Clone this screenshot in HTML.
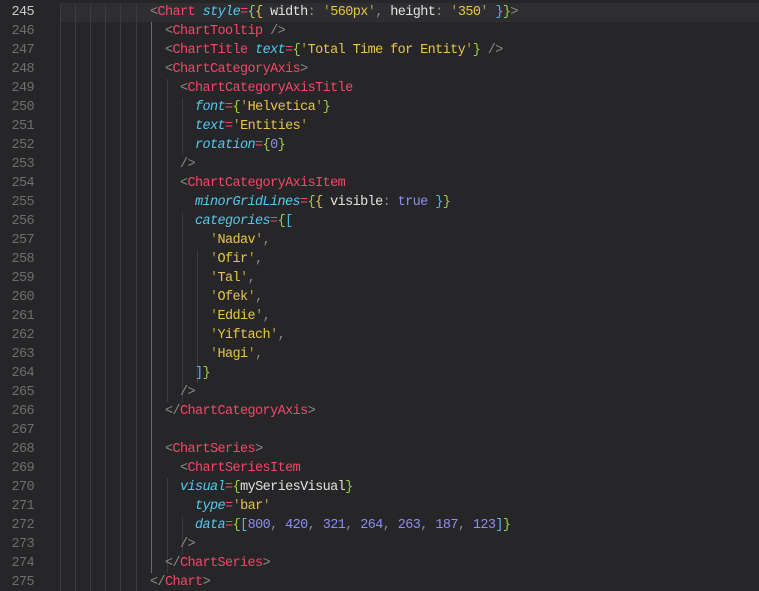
<!DOCTYPE html>
<html><head><meta charset="utf-8"><style>
html,body{margin:0;padding:0;background:#262628;width:759px;height:591px;overflow:hidden}
.ed{position:relative;width:759px;height:591px;font-family:"Liberation Mono",monospace;font-size:13.5px;letter-spacing:-0.6px}
.ln{position:absolute;left:0;width:34px;text-align:right;color:#6e6e6e;height:19px;line-height:19px}
.cur{color:#c8c8c8}
.l{position:absolute;left:60px;height:19px;line-height:19px;white-space:pre;color:#e2e2e2}
.hl{position:absolute;left:60px;right:0;top:3px;height:19px;background:#2e2e30}
.g{position:absolute;width:1px;background:#3c3c3e}
.t{color:#f44769}.p{color:#8a8a8a}.a{color:#56c8ec;font-style:italic}.e{color:#f44769}
.b1{color:#9bcf45}.b2{color:#e6c84a}.b3{color:#4fb8e0}.s{color:#e8c54a}.q{color:#b89a40}.n{color:#8d8df2}.w{color:#e2e2e2}
</style></head><body><div class="ed">
<div class="hl"></div>
<div class="g" style="left:60px;top:3px;height:588px"></div>
<div class="g" style="left:75px;top:3px;height:588px"></div>
<div class="g" style="left:90px;top:3px;height:588px"></div>
<div class="g" style="left:105px;top:3px;height:588px"></div>
<div class="g" style="left:120px;top:3px;height:588px"></div>
<div class="g" style="left:136px;top:3px;height:588px"></div>
<div class="g" style="left:151px;top:22px;height:551px;background:#6a6a6a"></div>
<div class="g" style="left:167px;top:79px;height:323px"></div>
<div class="g" style="left:167px;top:478px;height:95px"></div>
<div class="g" style="left:182px;top:98px;height:57px"></div>
<div class="g" style="left:182px;top:212px;height:190px"></div>
<div class="g" style="left:182px;top:516px;height:38px"></div>
<div class="g" style="left:197px;top:250px;height:133px"></div>

<div class="ln cur" style="top:3px">245</div>
<div class="ln" style="top:22px">246</div>
<div class="ln" style="top:41px">247</div>
<div class="ln" style="top:60px">248</div>
<div class="ln" style="top:79px">249</div>
<div class="ln" style="top:98px">250</div>
<div class="ln" style="top:117px">251</div>
<div class="ln" style="top:136px">252</div>
<div class="ln" style="top:155px">253</div>
<div class="ln" style="top:174px">254</div>
<div class="ln" style="top:193px">255</div>
<div class="ln" style="top:212px">256</div>
<div class="ln" style="top:231px">257</div>
<div class="ln" style="top:250px">258</div>
<div class="ln" style="top:269px">259</div>
<div class="ln" style="top:288px">260</div>
<div class="ln" style="top:307px">261</div>
<div class="ln" style="top:326px">262</div>
<div class="ln" style="top:345px">263</div>
<div class="ln" style="top:364px">264</div>
<div class="ln" style="top:383px">265</div>
<div class="ln" style="top:402px">266</div>
<div class="ln" style="top:421px">267</div>
<div class="ln" style="top:440px">268</div>
<div class="ln" style="top:459px">269</div>
<div class="ln" style="top:478px">270</div>
<div class="ln" style="top:497px">271</div>
<div class="ln" style="top:516px">272</div>
<div class="ln" style="top:535px">273</div>
<div class="ln" style="top:554px">274</div>
<div class="ln" style="top:573px">275</div>

<div class="l" style="top:3px">            <span class="p">&lt;</span><span class="t">Chart</span> <span class="a">style</span><span class="e">=</span><span class="b1">{</span><span class="b2">{</span> width<span class="p">:</span> <span class="q">'</span><span class="s">560px</span><span class="q">'</span><span class="p">,</span> height<span class="p">:</span> <span class="q">'</span><span class="s">350</span><span class="q">'</span> <span class="b3">}</span><span class="b1">}</span><span class="p">&gt;</span></div>
<div class="l" style="top:22px">              <span class="p">&lt;</span><span class="t">ChartTooltip</span> <span class="p">/&gt;</span></div>
<div class="l" style="top:41px">              <span class="p">&lt;</span><span class="t">ChartTitle</span> <span class="a">text</span><span class="e">=</span><span class="b1">{</span><span class="q">'</span><span class="s">Total Time for Entity</span><span class="q">'</span><span class="b1">}</span> <span class="p">/&gt;</span></div>
<div class="l" style="top:60px">              <span class="p">&lt;</span><span class="t">ChartCategoryAxis</span><span class="p">&gt;</span></div>
<div class="l" style="top:79px">                <span class="p">&lt;</span><span class="t">ChartCategoryAxisTitle</span></div>
<div class="l" style="top:98px">                  <span class="a">font</span><span class="e">=</span><span class="b1">{</span><span class="q">'</span><span class="s">Helvetica</span><span class="q">'</span><span class="b1">}</span></div>
<div class="l" style="top:117px">                  <span class="a">text</span><span class="e">=</span><span class="q">'</span><span class="s">Entities</span><span class="q">'</span></div>
<div class="l" style="top:136px">                  <span class="a">rotation</span><span class="e">=</span><span class="b1">{</span><span class="n">0</span><span class="b1">}</span></div>
<div class="l" style="top:155px">                <span class="p">/&gt;</span></div>
<div class="l" style="top:174px">                <span class="p">&lt;</span><span class="t">ChartCategoryAxisItem</span></div>
<div class="l" style="top:193px">                  <span class="a">minorGridLines</span><span class="e">=</span><span class="b1">{</span><span class="b2">{</span> visible<span class="p">:</span> <span class="n">true</span> <span class="b3">}</span><span class="b1">}</span></div>
<div class="l" style="top:212px">                  <span class="a">categories</span><span class="e">=</span><span class="b1">{</span><span class="b3">[</span></div>
<div class="l" style="top:231px">                    <span class="q">'</span><span class="s">Nadav</span><span class="q">'</span><span class="p">,</span></div>
<div class="l" style="top:250px">                    <span class="q">'</span><span class="s">Ofir</span><span class="q">'</span><span class="p">,</span></div>
<div class="l" style="top:269px">                    <span class="q">'</span><span class="s">Tal</span><span class="q">'</span><span class="p">,</span></div>
<div class="l" style="top:288px">                    <span class="q">'</span><span class="s">Ofek</span><span class="q">'</span><span class="p">,</span></div>
<div class="l" style="top:307px">                    <span class="q">'</span><span class="s">Eddie</span><span class="q">'</span><span class="p">,</span></div>
<div class="l" style="top:326px">                    <span class="q">'</span><span class="s">Yiftach</span><span class="q">'</span><span class="p">,</span></div>
<div class="l" style="top:345px">                    <span class="q">'</span><span class="s">Hagi</span><span class="q">'</span><span class="p">,</span></div>
<div class="l" style="top:364px">                  <span class="b3">]</span><span class="b1">}</span></div>
<div class="l" style="top:383px">                <span class="p">/&gt;</span></div>
<div class="l" style="top:402px">              <span class="p">&lt;/</span><span class="t">ChartCategoryAxis</span><span class="p">&gt;</span></div>
<div class="l" style="top:440px">              <span class="p">&lt;</span><span class="t">ChartSeries</span><span class="p">&gt;</span></div>
<div class="l" style="top:459px">                <span class="p">&lt;</span><span class="t">ChartSeriesItem</span></div>
<div class="l" style="top:478px">                <span class="a">visual</span><span class="e">=</span><span class="b1">{</span>mySeriesVisual<span class="b1">}</span></div>
<div class="l" style="top:497px">                  <span class="a">type</span><span class="e">=</span><span class="q">'</span><span class="s">bar</span><span class="q">'</span></div>
<div class="l" style="top:516px">                  <span class="a">data</span><span class="e">=</span><span class="b1">{</span><span class="b3">[</span><span class="n">800</span><span class="p">,</span> <span class="n">420</span><span class="p">,</span> <span class="n">321</span><span class="p">,</span> <span class="n">264</span><span class="p">,</span> <span class="n">263</span><span class="p">,</span> <span class="n">187</span><span class="p">,</span> <span class="n">123</span><span class="b3">]</span><span class="b1">}</span></div>
<div class="l" style="top:535px">                <span class="p">/&gt;</span></div>
<div class="l" style="top:554px">              <span class="p">&lt;/</span><span class="t">ChartSeries</span><span class="p">&gt;</span></div>
<div class="l" style="top:573px">            <span class="p">&lt;/</span><span class="t">Chart</span><span class="p">&gt;</span></div>
</div></body></html>
